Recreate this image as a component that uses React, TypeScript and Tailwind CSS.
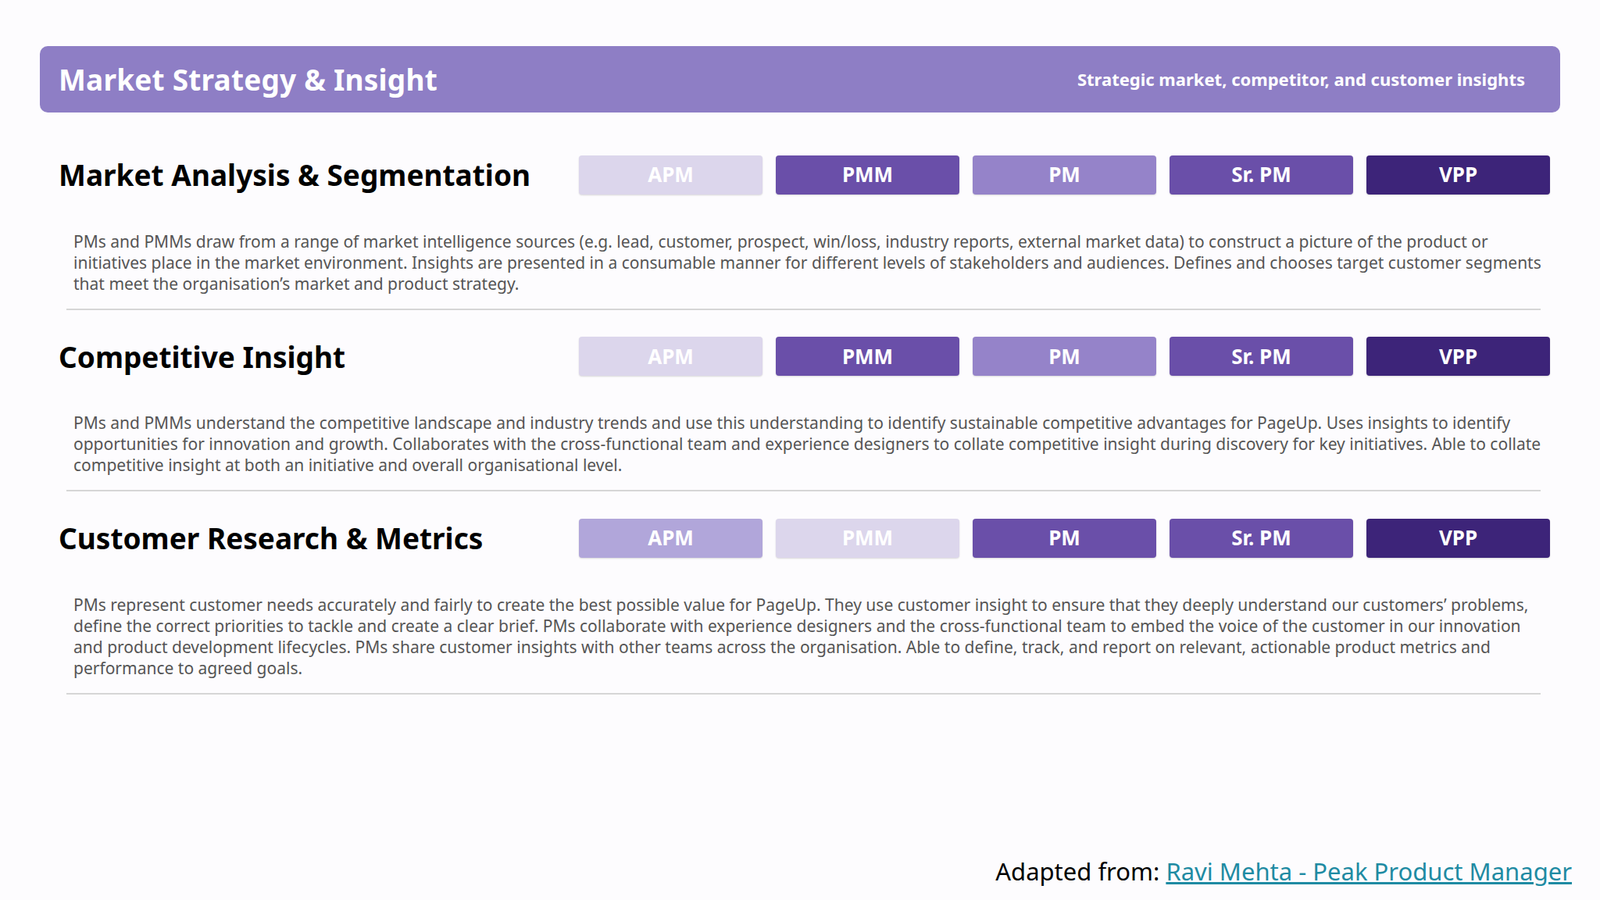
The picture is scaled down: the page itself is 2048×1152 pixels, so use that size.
const pill = {
  light: "bg-[#dcd6ec] text-white",
  mid: "bg-[#b1a6da] text-white",
  pm: "bg-[#9583c9] text-white",
  dark: "bg-[#6a4fa9] text-white",
  deep: "bg-[#3d2479] text-white",
};

type Row = { title: string; body: string; pills: [string, keyof typeof pill][] };

const rows: Row[] = [
  {
    title: "Market Analysis & Segmentation",
    body: "PMs and PMMs draw from a range of market intelligence sources (e.g. lead, customer, prospect, win/loss, industry reports, external market data) to construct a picture of the product or initiatives place in the market environment. Insights are presented in a consumable manner for different levels of stakeholders and audiences. Defines and chooses target customer segments that meet the organisation’s market and product strategy.",
    pills: [["APM", "light"], ["PMM", "dark"], ["PM", "pm"], ["Sr. PM", "dark"], ["VPP", "deep"]],
  },
  {
    title: "Competitive Insight",
    body: "PMs and PMMs understand the competitive landscape and industry trends and use this understanding to identify sustainable competitive advantages for PageUp. Uses insights to identify opportunities for innovation and growth. Collaborates with the cross-functional team and experience designers to collate competitive insight during discovery for key initiatives. Able to collate competitive insight at both an initiative and overall organisational level.",
    pills: [["APM", "light"], ["PMM", "dark"], ["PM", "pm"], ["Sr. PM", "dark"], ["VPP", "deep"]],
  },
  {
    title: "Customer Research & Metrics",
    body: "PMs represent customer needs accurately and fairly to create the best possible value for PageUp. They use customer insight to ensure that they deeply understand our customers’ problems, define the correct priorities to tackle and create a clear brief. PMs collaborate with experience designers and the cross-functional team to embed the voice of the customer in our innovation and product development lifecycles. PMs share customer insights with other teams across the organisation. Able to define, track, and report on relevant, actionable product metrics and performance to agreed goals.",
    pills: [["APM", "mid"], ["PMM", "light"], ["PM", "dark"], ["Sr. PM", "dark"], ["VPP", "deep"]],
  },
];

export default function App() {
  return (
    <div className="relative w-[2048px] h-[1152px] bg-[#fdfcfe] font-['Lato',sans-serif]">
      <div className="pt-[59px] pl-[51px] pr-[51px]">
        <div className="flex h-[85px] items-center justify-between rounded-[10px] bg-[#8e7ec5] pl-[24px] pr-[45px] text-white">
          <h1 className="text-[37px] font-bold tracking-[0.2px]">Market Strategy &amp; Insight</h1>
          <p className="text-[22px] font-bold">Strategic market, competitor, and customer insights</p>
        </div>
      </div>

      <div className="mt-[52px] pl-[75px] pr-[64px]">
        {rows.map((r) => (
          <section key={r.title} className="mb-[32px]">
            <div className="flex items-center justify-between">
              <h2 className="text-[37px] font-bold text-black">{r.title}</h2>
              <div className="flex gap-[17px]">
                {r.pills.map(([label, tone], i) => (
                  <div
                    key={i}
                    className={`flex h-[50px] w-[235px] items-center justify-center rounded-[4px] text-[26px] font-bold shadow-[0_1px_2px_rgba(0,0,0,0.15)] ${pill[tone]}`}
                  >
                    {label}
                  </div>
                ))}
              </div>
            </div>
            <p className="mt-[44px] pl-[19px] pr-[10px] font-['Liberation_Sans',Arial,sans-serif] text-[21px] leading-[27px] text-[#555]">
              {r.body}
            </p>
            <div className="mt-[18px] ml-[10px] mr-[12px] h-[2px] bg-[#d6d6d6]" />
          </section>
        ))}
      </div>

      <div className="absolute right-[36px] top-[1092px] font-['Liberation_Sans',Arial,sans-serif] text-[31px] text-black">
        Adapted from:{" "}
        <span className="text-[#1f8ba3] underline">Ravi Mehta - Peak Product Manager</span>
      </div>
    </div>
  );
}
